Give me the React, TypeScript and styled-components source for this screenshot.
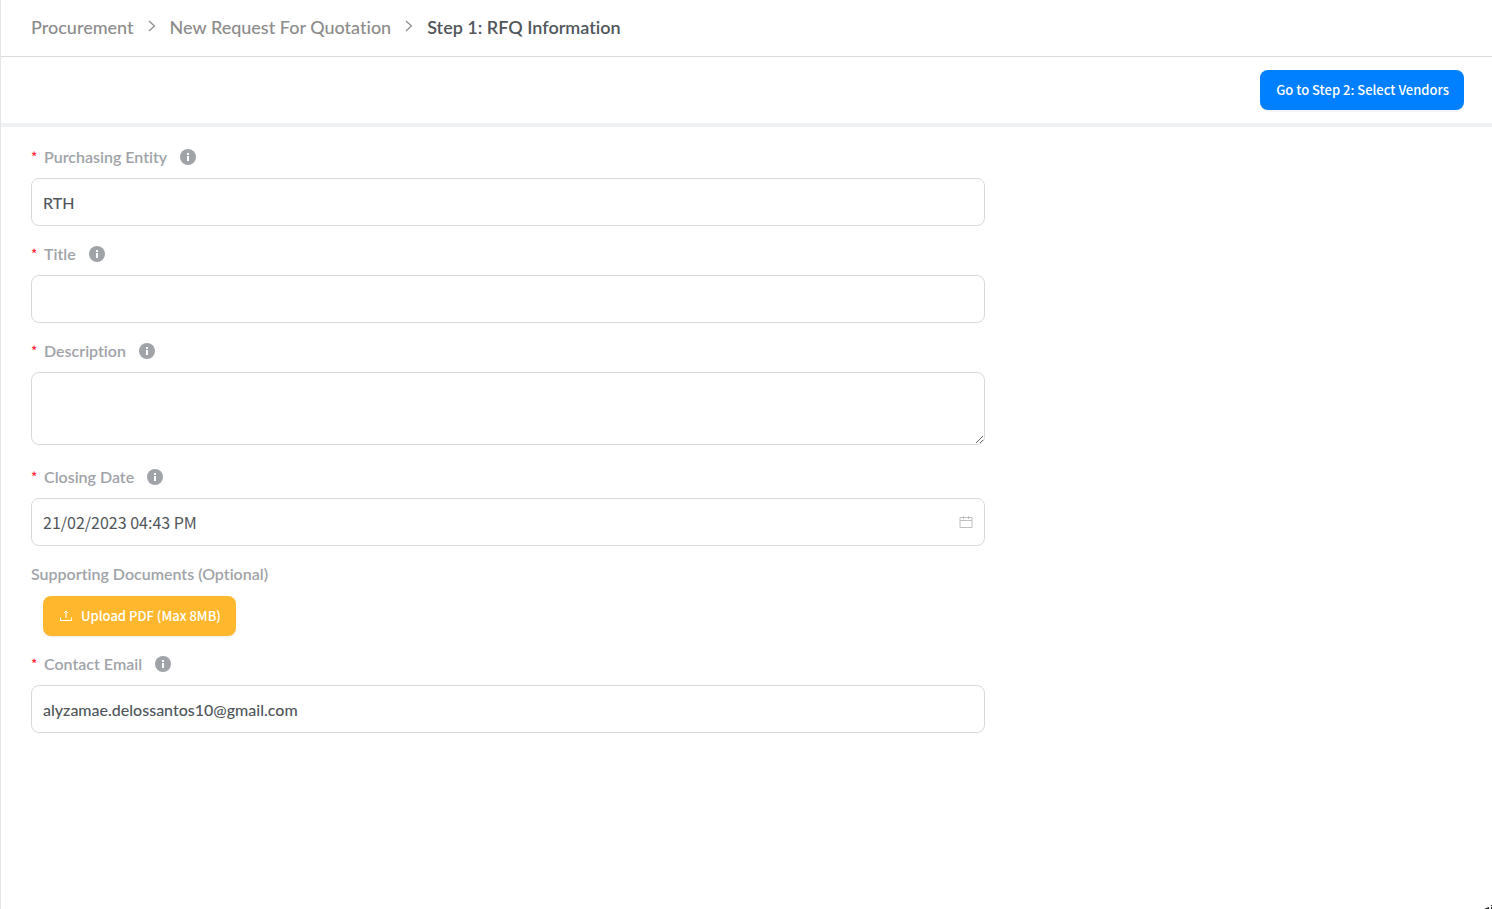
import React from "react";
import styled, { createGlobalStyle } from "styled-components";

const compactFamily = `"Noto Sans CJK SC", "Noto Sans", sans-serif`;

const GlobalStyle = createGlobalStyle`
  *, *::before, *::after { box-sizing: border-box; }
  body {
    margin: 0;
    background: #fff;
    color: #50565b;
    font-family: Lato, "Noto Sans", sans-serif;
    font-size: 16px;
    font-weight: 500;
    line-height: 24px;
    font-variant-ligatures: none;
  }
  button, input, textarea { font: inherit; color: inherit; }
`;

const Page = styled.div`
  min-height: 100vh;
  border-left: 1px solid #e4e6e8;
`;

const Header = styled.header`
  display: flex;
  align-items: center;
  height: 57px;
  padding: 0 30px 2px;
  border-bottom: 1px solid #dadcdd;
`;

const Crumbs = styled.ol`
  display: flex;
  align-items: center;
  margin: 0;
  padding: 0;
  list-style: none;
  font-size: 18px;
`;

const Crumb = styled.li`
  display: flex;
  align-items: center;
`;

const CrumbLink = styled.a`
  color: #8c8c8c;
  text-decoration: none;
`;

const Current = styled.span`
  color: #50565b;
  font-weight: 600;
`;

const Chevron = styled.svg`
  width: 8px;
  height: 12px;
  margin: 0 14px 2px;
`;

const Toolbar = styled.div`
  display: flex;
  align-items: center;
  justify-content: flex-end;
  height: 70px;
  padding: 0 28px;
  border-bottom: 4px solid #f0f1f5;
`;

const Button = styled.button<{ $tone: string }>`
  display: inline-flex;
  align-items: center;
  justify-content: center;
  gap: 8px;
  height: 40px;
  padding: 0 15px 0 16px;
  border: 0;
  border-radius: 8px;
  background: ${(p) => p.$tone};
  color: #fff;
  font-family: ${compactFamily};
  font-size: 13px;
  font-weight: 500;
  box-shadow: 0 2px 0 rgba(0, 0, 0, 0.04);
  cursor: pointer;
`;

const Main = styled.main`
  display: grid;
  grid-template-columns: 2fr 1fr;
  padding: 18px 30px;
`;

const Form = styled.form`
  display: flex;
  flex-direction: column;
  gap: 16px;
`;

const Field = styled.div<{ $extra?: number }>`
  display: flex;
  flex-direction: column;
  gap: 9px;
  padding-bottom: ${(p) => p.$extra ?? 0}px;
`;

const LabelRow = styled.div`
  display: flex;
  align-items: center;
  height: 24px;
  color: #a0a3a8;
`;

const Label = styled.label`
  font-weight: 600;
`;

const Star = styled.span`
  width: 13px;
  color: #ff2a3c;
  font-family: ${compactFamily};
  font-size: 13px;
`;

const InfoSvg = styled.svg`
  width: 16px;
  height: 16px;
  margin-left: 13px;
`;

const InputBox = styled.div`
  display: flex;
  align-items: center;
  height: 48px;
  padding: 0 11px;
  border: 1px solid #d9d9d9;
  border-radius: 8px;
`;

const Input = styled.input<{ $compact?: boolean }>`
  flex: 1;
  min-width: 0;
  height: 44px;
  padding: 0;
  border: 0;
  outline: 0;
  background: transparent;
  ${(p) => p.$compact && `font-family: ${compactFamily}; font-weight: 400;`}
`;

const TextArea = styled.textarea`
  display: block;
  width: 100%;
  height: 73px;
  padding: 8px 11px;
  border: 1px solid #d9d9d9;
  border-radius: 8px;
  outline: 0;
  resize: vertical;
`;

const UploadRow = styled.div`
  padding: 1px 12px 0;
`;

const Pointer = styled.svg`
  position: fixed;
  right: 0;
  bottom: 0;
  width: 9px;
  height: 4px;
`;

const Separator = () => (
  <Chevron viewBox="0 0 8 12" fill="none" stroke="#8c8c8c" strokeWidth="1.2" aria-hidden="true">
    <path d="M1 1l5.5 5L1 11" />
  </Chevron>
);

const Info = () => (
  <InfoSvg viewBox="0 0 16 16" aria-hidden="true">
    <circle cx="8" cy="8" r="8" fill="#a0a3a8" />
    <path d="M7 4h2v2H7zM7 7h2v5H7z" fill="#fff" />
  </InfoSvg>
);

const UploadIcon = () => (
  <svg width="14" height="14" viewBox="0 0 14 14" fill="none" stroke="#fff" aria-hidden="true">
    <path d="M1.5 8.5v3h11v-3M7 9V2.5M5 4.3L7 2l2 2.3" />
  </svg>
);

const CalendarIcon = () => (
  <svg width="14" height="14" viewBox="0 0 14 14" fill="none" stroke="#bfbfbf" aria-hidden="true">
    <path d="M1 2.5h12v10H1zM1 5.5h12M4.5 1v3M9.5 1v3" />
  </svg>
);

function FieldLabel({ id, text }: { id: string; text: string }) {
  return (
    <LabelRow>
      <Star>*</Star>
      <Label htmlFor={id}>{text}</Label>
      <Info />
    </LabelRow>
  );
}

interface TextFieldProps {
  id: string;
  text: string;
  value: string;
  compact?: boolean;
  icon?: React.ReactNode;
}

function TextField({ id, text, value, compact, icon }: TextFieldProps) {
  return (
    <Field>
      <FieldLabel id={id} text={text} />
      <InputBox>
        <Input id={id} defaultValue={value} $compact={compact} />
        {icon}
      </InputBox>
    </Field>
  );
}

export default function App() {
  return (
    <Page>
      <GlobalStyle />
      <Header>
        <nav aria-label="Breadcrumb">
          <Crumbs>
            <Crumb>
              <CrumbLink href="#procurement">Procurement</CrumbLink>
              <Separator />
            </Crumb>
            <Crumb>
              <CrumbLink href="#new-rfq">New Request For Quotation</CrumbLink>
              <Separator />
            </Crumb>
            <Crumb>
              <Current aria-current="page">Step 1: RFQ Information</Current>
            </Crumb>
          </Crumbs>
        </nav>
      </Header>
      <Toolbar>
        <Button type="button" $tone="#0080ff">Go to Step 2: Select Vendors</Button>
      </Toolbar>
      <Main>
        <Form>
          <TextField id="entity" text="Purchasing Entity" value="RTH" />
          <TextField id="title" text="Title" value="" />
          <Field $extra={4}>
            <FieldLabel id="description" text="Description" />
            <TextArea id="description" />
          </Field>
          <TextField id="closing" text="Closing Date" value="21/02/2023 04:43 PM" compact icon={<CalendarIcon />} />
          <Field>
            <LabelRow>
              <Label as="span">Supporting Documents (Optional)</Label>
            </LabelRow>
            <UploadRow>
              <Button type="button" $tone="#ffb82e">
                <UploadIcon />
                Upload PDF (Max 8MB)
              </Button>
            </UploadRow>
          </Field>
          <TextField id="email" text="Contact Email" value="alyzamae.delossantos10@gmail.com" />
        </Form>
      </Main>
      <Pointer viewBox="0 0 9 4" aria-hidden="true">
        <path d="M1 4l5-2v2zM8 0h1v1H8zM8 2h1v2H8z" fill="#222" />
      </Pointer>
    </Page>
  );
}
